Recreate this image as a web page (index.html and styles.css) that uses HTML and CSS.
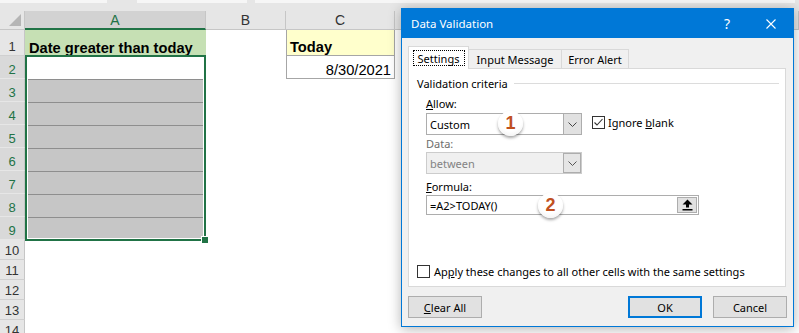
FILE: index.html
```html
<!DOCTYPE html>
<html lang="en">
<head>
    <meta charset="UTF-8">
    <meta name="viewport" content="width=device-width, initial-scale=1.0">
    <title>Data Validation</title>
    <link rel="stylesheet" href="styles.css">
</head>
<body>
    <div class="ribbon">
        <span class="seg seg1"></span>
        <span class="seg seg2"></span>
        <span class="seg seg3"></span>
    </div>

    <div class="sheet">
        <div class="row head">
            <div class="rh corner"><span class="tri"></span></div>
            <div class="cell ca">A</div>
            <div class="cell cb">B</div>
            <div class="cell cc">C</div>
            <div class="cell cd"></div>
        </div>
        <div class="row r1">
            <div class="rh">1</div>
            <div class="cell ca heading">Date greater than today</div>
            <div class="cell cb"></div>
            <div class="cell cc today">Today</div>
            <div class="cell cd"></div>
        </div>
        <div class="row">
            <div class="rh on">2</div>
            <div class="cell ca"></div>
            <div class="cell cb"></div>
            <div class="cell cc date">8/30/2021</div>
            <div class="cell cd"></div>
        </div>
        <div class="row"><div class="rh on">3</div><div class="cell ca shade"></div></div>
        <div class="row"><div class="rh on">4</div><div class="cell ca shade"></div></div>
        <div class="row"><div class="rh on">5</div><div class="cell ca shade"></div></div>
        <div class="row"><div class="rh on">6</div><div class="cell ca shade"></div></div>
        <div class="row"><div class="rh on">7</div><div class="cell ca shade"></div></div>
        <div class="row"><div class="rh on">8</div><div class="cell ca shade"></div></div>
        <div class="row"><div class="rh on">9</div><div class="cell ca shade"></div></div>
        <div class="row sm"><div class="rh">10</div></div>
        <div class="row sm"><div class="rh">11</div></div>
        <div class="row sm"><div class="rh">12</div></div>
        <div class="row sm"><div class="rh">13</div></div>
        <div class="row sm"><div class="rh">14</div></div>

        <!-- selected range A2:A9 -->
        <div class="selection"><span class="handle"></span></div>
    </div>

    <div class="dialog">
        <div class="titlebar">
            <span class="dlg-title">Data Validation</span>
            <span class="help">?</span>
            <svg class="close" width="10" height="10" viewBox="0 0 10 10">
                <path d="M0.5 0.5L9.5 9.5M9.5 0.5L0.5 9.5" stroke="#fff" stroke-width="1.1" fill="none"/>
            </svg>
        </div>

        <div class="body">
            <div class="tabs">
                <div class="tab active"><span class="focus">Settings</span></div>
                <div class="tab t2">Input Message</div>
                <div class="tab t3">Error Alert</div>
            </div>

            <div class="panel">
                <div class="group">
                    <span>Validation criteria</span>
                    <span class="rule"></span>
                </div>

                <div class="fields">
                    <div class="label"><u>A</u>llow:</div>
                    <div class="line">
                        <div class="combo">
                            <span class="val">Custom</span>
                            <span class="drop">
                                <svg width="9" height="5" viewBox="0 0 9 5"><path d="M0.5 0.5L4.5 4.5L8.5 0.5" stroke="#444" fill="none"/></svg>
                            </span>
                        </div>
                        <div class="check ignore">
                            <span class="box">
                                <svg width="11" height="11" viewBox="0 0 11 11"><path d="M1.5 5.5L4 8L9.5 2" stroke="#333" stroke-width="1.1" fill="none"/></svg>
                            </span>
                            <span>Ignore <u>b</u>lank</span>
                        </div>
                    </div>

                    <div class="label dim">Data:</div>
                    <div class="combo disabled">
                        <span class="val">between</span>
                        <span class="drop">
                            <svg width="9" height="5" viewBox="0 0 9 5"><path d="M0.5 0.5L4.5 4.5L8.5 0.5" stroke="#555" fill="none"/></svg>
                        </span>
                    </div>

                    <div class="label f-label"><u>F</u>ormula:</div>
                    <div class="refedit">
                        <span class="val">=A2&gt;TODAY()</span>
                        <span class="refbtn">
                            <svg width="11" height="12" viewBox="0 0 11 12">
                                <polygon points="5.5,0.5 10.5,5.5 7,5.5 7,8.5 4,8.5 4,5.5 0.5,5.5" fill="#000"/>
                                <rect x="0.5" y="10" width="10" height="1.5" fill="#000"/>
                            </svg>
                        </span>
                    </div>
                </div>

                <div class="check apply">
                    <span class="box"></span>
                    <span>Ap<u>p</u>ly these changes to all other cells with the same settings</span>
                </div>
            </div>

            <div class="buttons">
                <button class="btn"><u>C</u>lear All</button>
                <span class="spacer"></span>
                <button class="btn default">OK</button>
                <button class="btn cancel">Cancel</button>
            </div>
        </div>

        <span class="badge b1">1</span>
        <span class="badge b2">2</span>
    </div>
</body>
</html>
```

FILE: styles.css
```css
* {
    box-sizing: border-box;
}
body {
    margin: 0;
    width: 799px;
    height: 333px;
    overflow: hidden;
    position: relative;
    background: #fff;
    font-family: "Liberation Sans", Arial, sans-serif;
}

/* ---- spreadsheet ---- */
.ribbon {
    height: 11px;
    background: #e6e6e6;
    display: flex;
    align-items: flex-start;
}
.seg {
    height: 3px;
    background: #f6f6f6;
}
.seg1 { width: 107px; }
.seg2 { width: 110px; margin-left: 30px; }
.seg3 { width: 540px; margin-left: 8px; }

.sheet {
    position: relative;
}
.row {
    display: flex;
    height: 23px;
}
.row.head { height: 19px; }
.row.r1 { height: 26px; }
.row.sm { height: 20px; }

.rh {
    width: 25px;
    flex: none;
    display: flex;
    align-items: flex-end;
    justify-content: center;
    padding-bottom: 1px;
    background: #e6e6e6;
    border-right: 1px solid #c6c6c6;
    border-bottom: 1px solid #d0d0d0;
    color: #333;
    font-size: 13px;
}
.rh.on {
    background: #d9d9d9;
    color: #217346;
    border-bottom-color: #e6e6e6;
}
.corner {
    position: relative;
    border-bottom: 1px solid #c6c6c6;
}
.tri {
    position: absolute;
    right: 3px;
    bottom: 3px;
    width: 0;
    height: 0;
    border-left: 12px solid transparent;
    border-bottom: 12px solid #b5b5b5;
}

.cell {
    flex: none;
    display: flex;
    align-items: flex-end;
    padding: 0 3px 0 4px;
    font-size: 14.67px;
    color: #000;
    white-space: nowrap;
}
.ca { width: 181px; }
.cb { width: 80px; }
.cc { width: 109px; }
.cd { flex: 1; }

.head .cell {
    align-items: center;
    justify-content: center;
    padding: 0;
    font-size: 14px;
    color: #333;
    background: #e6e6e6;
    border-right: 1px solid #c6c6c6;
    border-bottom: 1px solid #c6c6c6;
}
.head .ca {
    background: #d2d2d2;
    color: #217346;
    border-bottom: 2px solid #217346;
}

.heading {
    background: #c6e0b4;
    font-weight: bold;
}
.today {
    background: #ffffcc;
    font-weight: bold;
    padding-left: 3px;
    border-left: 1px solid #a6a6a6;
    border-right: 1px solid #a6a6a6;
    border-bottom: 1px solid #a6a6a6;
}
.date {
    justify-content: flex-end;
    border-left: 1px solid #a6a6a6;
    border-right: 1px solid #a6a6a6;
    border-bottom: 1px solid #a6a6a6;
}
.shade {
    background: #c6c6c6;
    border-top: 1px solid #8e8e8e;
}

.selection {
    position: absolute;
    left: 25px;
    top: 44px;
    width: 181px;
    height: 186px;
    border: 2px solid #217346;
    box-shadow: inset 0 0 0 1px #fff;
}
.handle {
    position: absolute;
    left: 174px;
    top: 179px;
    width: 8px;
    height: 8px;
    background: #217346;
    border: 1px solid #fff;
}

/* ---- dialog ---- */
.dialog {
    position: absolute;
    left: 401px;
    top: 8px;
    width: 393px;
    height: 319px;
    display: flex;
    flex-direction: column;
    background: #f0f0f0;
    border: 1px solid #0078d7;
    box-shadow: 0 2px 12px rgba(0, 0, 0, 0.3);
    font-family: "Noto Sans", sans-serif;
    font-size: 11px;
    color: #000;
}
.titlebar {
    height: 29px;
    flex: none;
    display: flex;
    align-items: center;
    padding-left: 9px;
    background: #0078d7;
    color: #fff;
}
.dlg-title {
    flex: 1;
    font-size: 11.5px;
}
.help {
    font-size: 14px;
    margin-right: 36px;
}
.close {
    margin-right: 17px;
}

.body {
    flex: 1;
    display: flex;
    flex-direction: column;
    padding: 8px 7px 0 6px;
}
.tabs {
    display: flex;
    align-items: flex-end;
    height: 22px;
}
.tab {
    height: 19px;
    display: flex;
    align-items: center;
    justify-content: center;
    border: 1px solid #d9d9d9;
    border-bottom: none;
    background: #f0f0f0;
}
.tab.active {
    width: 61px;
    height: 23px;
    margin-bottom: -1px;
    background: #fff;
    position: relative;
    z-index: 1;
}
.tab.t2 {
    width: 94px;
    margin-left: -1px;
}
.tab.t3 {
    width: 68px;
    margin-left: -1px;
}
.focus {
    width: 52px;
    height: 16px;
    display: flex;
    align-items: center;
    justify-content: center;
    border: 1px dotted #000;
}

.panel {
    height: 219px;
    display: flex;
    flex-direction: column;
    padding: 0 6px 0 8px;
    background: #fff;
    border: 1px solid #d9d9d9;
}
.group {
    height: 16px;
    margin-top: 6px;
    display: flex;
    align-items: center;
}
.rule {
    flex: 1;
    height: 1px;
    margin-left: 6px;
    background: #dcdcdc;
}
.fields {
    margin-left: 9px;
}
.label {
    height: 16px;
    line-height: 16px;
    margin-top: 5px;
}
.label.dim {
    margin-top: 1px;
    color: #6d6d6d;
}
.line {
    display: flex;
    align-items: flex-start;
    margin-top: 1px;
}

.combo {
    width: 156px;
    height: 22px;
    display: flex;
    align-items: center;
    background: #fff;
    border: 1px solid #adadad;
}
.combo .val,
.refedit .val {
    flex: 1;
    padding-left: 3px;
}
.drop {
    width: 18px;
    height: 100%;
    display: flex;
    align-items: center;
    justify-content: center;
    background: #e1e1e1;
    border-left: 1px solid #adadad;
}
.combo.disabled {
    background: #f0f0f0;
    border-color: #cccccc;
    color: #838383;
}
.combo.disabled .drop {
    border: 1px solid #adadad;
    background: #e5e5e5;
}

.check {
    display: flex;
    align-items: center;
    height: 16px;
}
.box {
    width: 13px;
    height: 13px;
    flex: none;
    display: flex;
    align-items: center;
    justify-content: center;
    background: #fff;
    border: 1px solid #333;
}
.ignore {
    margin-left: 10px;
    margin-top: 1px;
    gap: 3px;
}
.apply {
    margin-top: auto;
    margin-bottom: 7px;
    gap: 4px;
}

.f-label {
    margin-top: 5px;
}
.refedit {
    width: 273px;
    height: 20px;
    display: flex;
    align-items: center;
    background: #fff;
    border: 1px solid #adadad;
}
.refbtn {
    width: 20px;
    height: 16px;
    margin: 1px;
    display: flex;
    align-items: center;
    justify-content: center;
    background: #e1e1e1;
    border: 1px solid #adadad;
}

.buttons {
    display: flex;
    margin-top: 9px;
    margin-right: -1px;
}
.spacer {
    flex: 1;
}
.btn {
    width: 74px;
    height: 22px;
    padding: 0;
    font: inherit;
    color: #000;
    background: #e1e1e1;
    border: 1px solid #adadad;
}
.btn.default {
    border: 2px solid #0078d7;
}
.btn.cancel {
    margin-left: 11px;
}

/* numbered callouts */
.badge {
    position: absolute;
    width: 25px;
    height: 25px;
    display: flex;
    align-items: center;
    justify-content: center;
    border-radius: 50%;
    background: radial-gradient(circle at 50% 35%, #ffffff 55%, #ececec 100%);
    box-shadow: 0 2px 3px rgba(0, 0, 0, 0.35);
    color: #c0501f;
    font-family: "Liberation Sans", Arial, sans-serif;
    font-weight: bold;
    font-size: 18px;
}
.b1 {
    left: 96px;
    top: 102px;
}
.b2 {
    left: 136px;
    top: 184px;
}
```
